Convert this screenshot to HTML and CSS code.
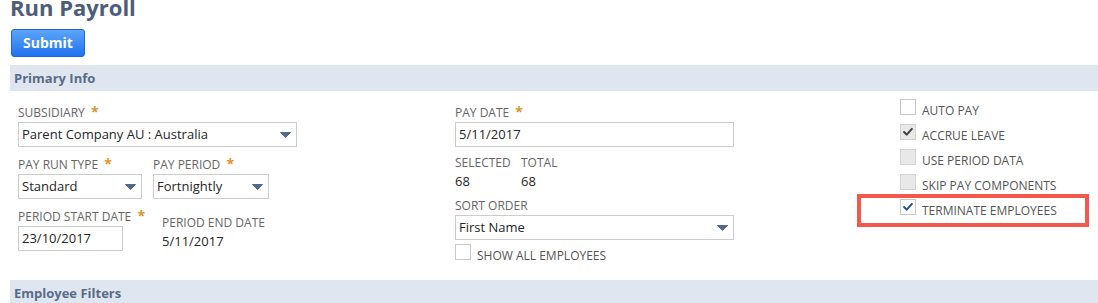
FILE: index.html
```html
<!DOCTYPE html>
<html>
<head>
<meta charset="utf-8">
<title>Run Payroll</title>
<link rel="stylesheet" href="styles.css">
</head>
<body>
<div class="page">
  <h1 class="title">Run Payroll</h1>
  <div class="actions"><button class="btn-submit" type="button">Submit</button></div>
  <div class="section-bar">Primary Info</div>
  <div class="form-grid">
    <div class="col">
      <div class="field">
        <div class="label">SUBSIDIARY <span class="req">*</span></div>
        <div class="select w279"><span>Parent Company AU : Australia</span><svg class="caret" viewBox="0 0 11 6"><polygon points="0.5,0.5 10.5,0.5 5.5,5.5"/></svg></div>
      </div>
      <div class="row row-a">
        <div class="field">
          <div class="label">PAY RUN TYPE <span class="req">*</span></div>
          <div class="select w124"><span>Standard</span><svg class="caret" viewBox="0 0 11 6"><polygon points="0.5,0.5 10.5,0.5 5.5,5.5"/></svg></div>
        </div>
        <div class="field">
          <div class="label">PAY PERIOD <span class="req">*</span></div>
          <div class="select w116"><span>Fortnightly</span><svg class="caret" viewBox="0 0 11 6"><polygon points="0.5,0.5 10.5,0.5 5.5,5.5"/></svg></div>
        </div>
      </div>
      <div class="row row-b">
        <div class="field start">
          <div class="label">PERIOD START DATE <span class="req">*</span></div>
          <div class="input w105">23/10/2017</div>
        </div>
        <div class="field end">
          <div class="label">PERIOD END DATE</div>
          <div class="value">5/11/2017</div>
        </div>
      </div>
    </div>
    <div class="col">
      <div class="field">
        <div class="label">PAY DATE <span class="req">*</span></div>
        <div class="input w279">5/11/2017</div>
      </div>
      <div class="counts">
        <div class="count">
          <div class="label">SELECTED</div>
          <div class="value">68</div>
        </div>
        <div class="count">
          <div class="label">TOTAL</div>
          <div class="value">68</div>
        </div>
      </div>
      <div class="field sort">
        <div class="label">SORT ORDER</div>
        <div class="select w279"><span>First Name</span><svg class="caret" viewBox="0 0 11 6"><polygon points="0.5,0.5 10.5,0.5 5.5,5.5"/></svg></div>
      </div>
      <div class="cb-row show-all">
        <span class="cb"></span>
        <span class="cb-label">SHOW ALL EMPLOYEES</span>
      </div>
    </div>
    <div class="col col3">
      <div class="cb-row">
        <span class="cb"></span>
        <span class="cb-label">AUTO PAY</span>
      </div>
      <div class="cb-row">
        <span class="cb disabled"><svg viewBox="0 0 16 16"><polyline class="chk-dark" points="3.5,8 6.5,11 12.5,4.5"/></svg></span>
        <span class="cb-label">ACCRUE LEAVE</span>
      </div>
      <div class="cb-row">
        <span class="cb disabled"></span>
        <span class="cb-label">USE PERIOD DATA</span>
      </div>
      <div class="cb-row">
        <span class="cb disabled"></span>
        <span class="cb-label">SKIP PAY COMPONENTS</span>
      </div>
      <div class="cb-row marked">
        <span class="cb"><svg viewBox="0 0 16 16"><polyline class="chk-blue" points="3.5,8 6.5,11 12.5,4.5"/></svg></span>
        <span class="cb-label">TERMINATE EMPLOYEES</span>
        <span class="highlight"></span>
      </div>
    </div>
  </div>
  <div class="section-bar">Employee Filters</div>
</div>
</body>
</html>
```
FILE: styles.css
```css
html, body {
  margin: 0;
  padding: 0;
  overflow: hidden;
  background: #fff;
}
body {
  font-family: "Open Sans", "Liberation Sans", sans-serif;
  color: #262626;
}
.page {
  padding-left: 10px;
}
.title {
  margin: -4px 0 0 0;
  font-size: 22px;
  line-height: 22px;
  font-weight: 700;
  color: #4d5d79;
}
.actions {
  display: flex;
  margin-top: 11px;
  padding-left: 1px;
}
.btn-submit {
  display: block;
  width: 74px;
  height: 28px;
  padding: 0;
  border: 1px solid #2366cf;
  border-radius: 3px;
  background: linear-gradient(#5da4fc, #1f73ee);
  color: #fff;
  font-family: "Open Sans", sans-serif;
  font-size: 14px;
  font-weight: 700;
  line-height: 26px;
}
.section-bar {
  margin-top: 8px;
  height: 26px;
  padding-left: 4px;
  background: #dfe6f0;
  color: #5a6b86;
  font-size: 13px;
  font-weight: 700;
  line-height: 26px;
}
.form-grid {
  display: grid;
  grid-template-columns: 437px 445px 1fr;
  align-items: start;
  padding: 14px 0 16px 8px;
}
.form-grid + .section-bar {
  margin-top: 0;
}
.col {
  display: flex;
  flex-direction: column;
}
.col3 {
  margin-top: -6px;
  gap: 5px;
}
.field {
  display: flex;
  flex-direction: column;
}
.label {
  font-size: 12px;
  line-height: 16px;
  color: #666;
  margin-bottom: 1px;
  white-space: nowrap;
}
.req {
  margin-left: 3px;
  color: #df9428;
  font-weight: 700;
  font-size: 14px;
  line-height: 0;
}
.select, .input {
  box-sizing: border-box;
  height: 25px;
  border: 1px solid #ccc;
  background: #fff;
  font-size: 13px;
  line-height: 23px;
  color: #262626;
  padding-left: 3px;
  white-space: nowrap;
}
.select {
  display: flex;
  align-items: center;
  justify-content: space-between;
  padding-right: 5px;
}
.caret {
  width: 11px;
  height: 6px;
  flex: none;
}
.caret polygon {
  fill: #52698c;
  stroke: #52698c;
  stroke-width: 1;
  stroke-linejoin: round;
}
.w279 { width: 279px; }
.w124 { width: 124px; }
.w116 { width: 116px; }
.w105 { width: 105px; }
.row {
  display: flex;
  margin-top: 10px;
}
.row-a {
  gap: 11px;
}
.start {
  width: 144px;
}
.end {
  margin-top: 6px;
}
.value {
  font-size: 13px;
  line-height: 18px;
  color: #262626;
}
.counts {
  display: flex;
  margin-top: 8px;
}
.count {
  width: 66px;
}
.sort {
  margin-top: 8px;
}
.cb-row {
  position: relative;
  display: flex;
  align-items: flex-start;
  gap: 6px;
}
.show-all {
  margin-top: 4px;
}
.cb {
  box-sizing: border-box;
  display: block;
  width: 16px;
  height: 16px;
  border: 1px solid #c9c9c9;
  background: #fff;
  flex: none;
}
.cb.disabled {
  background: #e8e8e8;
  border-color: #d3d3d3;
}
.cb svg {
  display: block;
  width: 14px;
  height: 14px;
}
.chk-dark, .chk-blue {
  fill: none;
  stroke-width: 2.3;
  stroke-linecap: round;
  stroke-linejoin: round;
}
.chk-dark { stroke: #3d3d3d; }
.chk-blue { stroke: #22509a; }
.cb-label {
  font-size: 12px;
  line-height: 16px;
  padding-top: 4px;
  color: #555;
  white-space: nowrap;
}
.highlight {
  position: absolute;
  left: -43px;
  top: -5px;
  width: 232px;
  height: 33px;
  box-sizing: border-box;
  border: 4px solid #f3584c;
}
```
